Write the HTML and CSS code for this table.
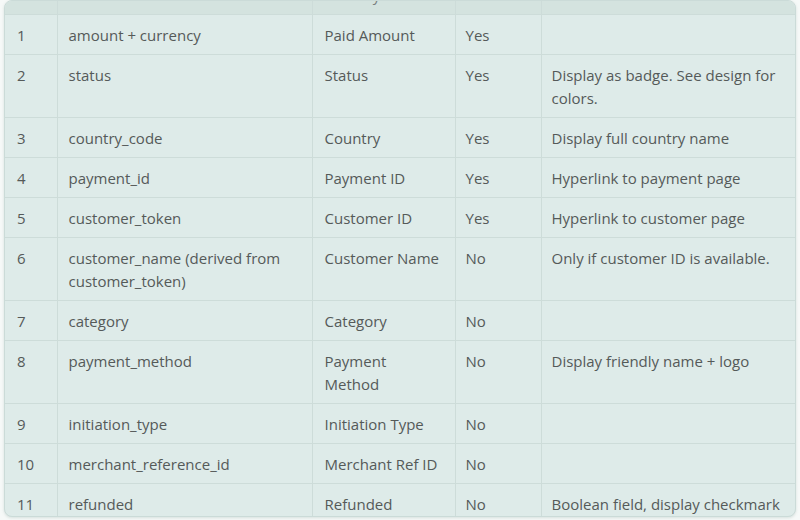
FILE: index.html
```html
<!DOCTYPE html>
<html>
<head>
<meta charset="utf-8">
<link rel="stylesheet" href="styles.css">
</head>
<body>
<div class="card">
  <table class="grid">
    <colgroup>
      <col class="c-num">
      <col class="c-field">
      <col class="c-name">
      <col class="c-def">
      <col class="c-notes">
    </colgroup>
    <thead>
      <tr><th>#</th><th>API Field</th><th>Friendly Name</th><th>Default</th><th>Notes</th></tr>
    </thead>
    <tbody>
      <tr><td>1</td><td>amount + currency</td><td>Paid Amount</td><td>Yes</td><td></td></tr>
      <tr><td>2</td><td>status</td><td>Status</td><td>Yes</td><td>Display as badge. See design for<br>colors.</td></tr>
      <tr><td>3</td><td>country_code</td><td>Country</td><td>Yes</td><td>Display full country name</td></tr>
      <tr><td>4</td><td>payment_id</td><td>Payment ID</td><td>Yes</td><td>Hyperlink to payment page</td></tr>
      <tr><td>5</td><td>customer_token</td><td>Customer ID</td><td>Yes</td><td>Hyperlink to customer page</td></tr>
      <tr><td>6</td><td>customer_name (derived from<br>customer_token)</td><td>Customer Name</td><td>No</td><td>Only if customer ID is available.</td></tr>
      <tr><td>7</td><td>category</td><td>Category</td><td>No</td><td></td></tr>
      <tr><td>8</td><td>payment_method</td><td>Payment<br>Method</td><td>No</td><td>Display friendly name + logo</td></tr>
      <tr><td>9</td><td>initiation_type</td><td>Initiation Type</td><td>No</td><td></td></tr>
      <tr><td>10</td><td>merchant_reference_id</td><td>Merchant Ref ID</td><td>No</td><td></td></tr>
      <tr><td>11</td><td>refunded</td><td>Refunded</td><td>No</td><td>Boolean field, display checkmark</td></tr>
    </tbody>
  </table>
</div>
</body>
</html>
```
FILE: styles.css
```css
html, body {
  margin: 0;
  padding: 0;
  background: #f6f9f8;
}
body {
  width: 800px;
  height: 520px;
  overflow: hidden;
  font-family: "Open Sans", "Noto Sans", sans-serif;
}
.card {
  margin: 0 4px 0 4px;
  height: 515px;
  border: 1px solid #cbdbd8;
  border-radius: 8px;
  overflow: hidden;
  background: #deebe9;
  box-shadow: 0 1px 3px rgba(120, 150, 145, 0.25);
}
.grid {
  margin-top: -26px;
  width: 100%;
  border-collapse: collapse;
  table-layout: fixed;
  font-size: 15px;
  color: #555a59;
}
.c-num { width: 52px; }
.c-field { width: 255px; }
.c-name { width: 143px; }
.c-def { width: 86px; }
.grid th, .grid td {
  text-align: left;
  vertical-align: top;
  padding: 9px 10px 7px 12px;
  line-height: 23px;
  border: 1px solid #cddcd9;
  white-space: nowrap;
}
.grid tr > :nth-child(2) { padding-left: 11px; }
.grid tr > :nth-child(4),
.grid tr > :nth-child(5) { padding-left: 10px; }
.grid th {
  background: #d4e3df;
  font-weight: 400;
  color: #7a817f;
}
.grid tr > :first-child { border-left: none; }
.grid tr > :last-child { border-right: none; }
.grid thead tr th { border-top: none; }
```
